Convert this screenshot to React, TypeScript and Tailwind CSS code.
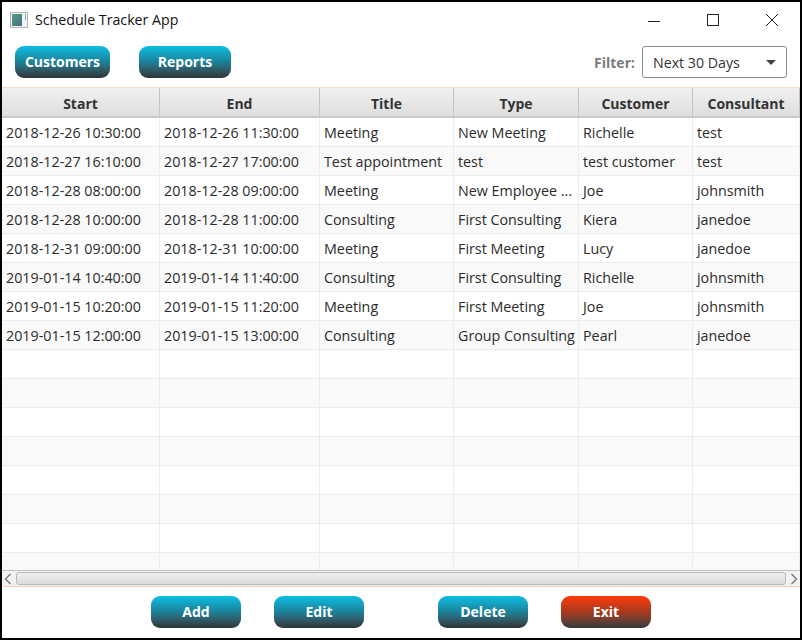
interface Appointment {
  start: string;
  end: string;
  title: string;
  type: string;
  customer: string;
  consultant: string;
}

const appointments: Appointment[] = [
  { start: "2018-12-26 10:30:00", end: "2018-12-26 11:30:00", title: "Meeting", type: "New Meeting", customer: "Richelle", consultant: "test" },
  { start: "2018-12-27 16:10:00", end: "2018-12-27 17:00:00", title: "Test appointment", type: "test", customer: "test customer", consultant: "test" },
  { start: "2018-12-28 08:00:00", end: "2018-12-28 09:00:00", title: "Meeting", type: "New Employee ...", customer: "Joe", consultant: "johnsmith" },
  { start: "2018-12-28 10:00:00", end: "2018-12-28 11:00:00", title: "Consulting", type: "First Consulting", customer: "Kiera", consultant: "janedoe" },
  { start: "2018-12-31 09:00:00", end: "2018-12-31 10:00:00", title: "Meeting", type: "First Meeting", customer: "Lucy", consultant: "janedoe" },
  { start: "2019-01-14 10:40:00", end: "2019-01-14 11:40:00", title: "Consulting", type: "First Consulting", customer: "Richelle", consultant: "johnsmith" },
  { start: "2019-01-15 10:20:00", end: "2019-01-15 11:20:00", title: "Meeting", type: "First Meeting", customer: "Joe", consultant: "johnsmith" },
  { start: "2019-01-15 12:00:00", end: "2019-01-15 13:00:00", title: "Consulting", type: "Group Consulting", customer: "Pearl", consultant: "janedoe" },
];

const columns = ["Start", "End", "Title", "Type", "Customer", "Consultant"];
const gridCols = "grid grid-cols-[158px_160px_134px_125px_114px_107px]";
const emptyRows = Array.from({ length: 8 });

const AppButton = ({ label, exit, className }: { label: string; exit?: boolean; className: string }) => (
  <button
    className={`h-8 rounded-[9px] pb-[2px] text-[14px] font-bold text-white ${
      exit
        ? "bg-gradient-to-b from-[#ff3800] via-[#a83a1c] to-[#33383a]"
        : "bg-gradient-to-b from-[#08bfe4] via-[#1a8199] to-[#2e3538]"
    } ${className}`}
  >
    {label}
  </button>
);

const Row = ({ row, index }: { row?: Appointment; index: number }) => {
  const cells = row ? [row.start, row.end, row.title, row.type, row.customer, row.consultant] : ["", "", "", "", "", ""];
  return (
    <div className={`${gridCols} h-[29px] border-b border-[#ececec] ${index % 2 ? "bg-[#f9f9f9]" : "bg-white"}`}>
      {cells.map((cell, i) => (
        <div key={i} className="flex items-center overflow-hidden whitespace-nowrap border-r border-[#ececec] pl-[4px] pt-[1px] text-[14.3px] text-[#2b2b2b]">
          {cell}
        </div>
      ))}
    </div>
  );
};

export default function App() {
  return (
    <div className="flex h-[640px] w-[802px] flex-col border-2 border-black bg-white font-['Open_Sans',sans-serif]">
      <div className="flex h-[35px] items-center pl-[8px]">
        <div className="mr-[7px] flex h-[16px] w-[18px] border border-[#b5b5b5] bg-[#f4f4f4] p-[1px]">
          <div className="h-full w-[10px] bg-gradient-to-br from-[#4fa07c] to-[#4a6a8a]" />
          <div className="ml-[3px] h-[6px] w-[1px] bg-[#7fb0a8]" />
        </div>
        <span className="text-[14.2px] text-[#111]">Schedule Tracker App</span>
        <div className="ml-auto flex items-center">
          <svg width="14" height="14" viewBox="0 0 14 14" className="mr-[45px]">
            <path d="M1 8.5h12" stroke="#222" strokeWidth="1" />
          </svg>
          <svg width="14" height="14" viewBox="0 0 14 14" className="mr-[45px]">
            <rect x="1.5" y="1.5" width="11" height="11" fill="none" stroke="#222" strokeWidth="1" />
          </svg>
          <svg width="14" height="14" viewBox="0 0 14 14" className="mr-[21px]">
            <path d="M1 1l12 12M13 1L1 13" stroke="#222" strokeWidth="1" />
          </svg>
        </div>
      </div>

      <div className="flex h-[50px] items-center pl-[13px] pr-[13px]">
        <AppButton label="Customers" className="w-[95px]" />
        <div className="w-[29px] shrink-0" />
        <AppButton label="Reports" className="w-[92px]" />
        <span className="ml-auto mr-[7px] text-[14px] font-bold text-[#7b7b7b]">Filter:</span>
        <div className="flex h-[32px] w-[145px] items-center rounded-[3px] border border-[#8a8a8a] bg-white pl-[10px] pr-[10px] pt-[1px] text-[14.2px] text-[#333]">
          Next 30 Days
          <div className="ml-auto h-0 w-0 border-x-[5px] border-t-[5px] border-x-transparent border-t-[#444]" />
        </div>
      </div>

      <div className="h-[1px] bg-[#fbd9cc]" />

      <div className={`${gridCols} h-[30px] border-b-2 border-[#c9c9c9] bg-gradient-to-b from-[#f1f1f1] to-[#dedede]`}>
        {columns.map((col) => (
          <div key={col} className="flex items-center justify-center whitespace-nowrap border-r border-[#c4c4c4] pt-[2px] text-[14px] font-bold text-[#333]">
            {col}
          </div>
        ))}
      </div>

      <div className="min-h-0 flex-1 overflow-hidden">
        {appointments.map((row, i) => (
          <Row key={row.start} row={row} index={i} />
        ))}
        {emptyRows.map((_, i) => (
          <Row key={i} index={i + appointments.length} />
        ))}
      </div>

      <div className="flex h-[16px] items-center border-t border-[#c4c4c4] bg-[#f2f2f2]">
        <svg width="14" height="14" viewBox="0 0 14 14" className="shrink-0">
          <path d="M8.5 2L3.5 7l5 5" fill="none" stroke="#777" strokeWidth="1.4" />
        </svg>
        <div className="h-[13px] flex-1 rounded-[3px] border border-[#b9b9b9] bg-gradient-to-b from-[#efefef] to-[#dcdcdc]" />
        <svg width="14" height="14" viewBox="0 0 14 14" className="shrink-0">
          <path d="M5.5 2l5 5-5 5" fill="none" stroke="#777" strokeWidth="1.4" />
        </svg>
      </div>
      <div className="h-[1px] bg-[#fbd0bd]" />

      <div className="flex h-[51px] items-center pl-[149px] pb-[1px]">
        <AppButton label="Add" className="w-[90px]" />
        <div className="w-[33px]" />
        <AppButton label="Edit" className="w-[90px]" />
        <div className="w-[74px]" />
        <AppButton label="Delete" className="w-[90px]" />
        <div className="w-[33px]" />
        <AppButton label="Exit" exit className="w-[90px]" />
      </div>
    </div>
  );
}
